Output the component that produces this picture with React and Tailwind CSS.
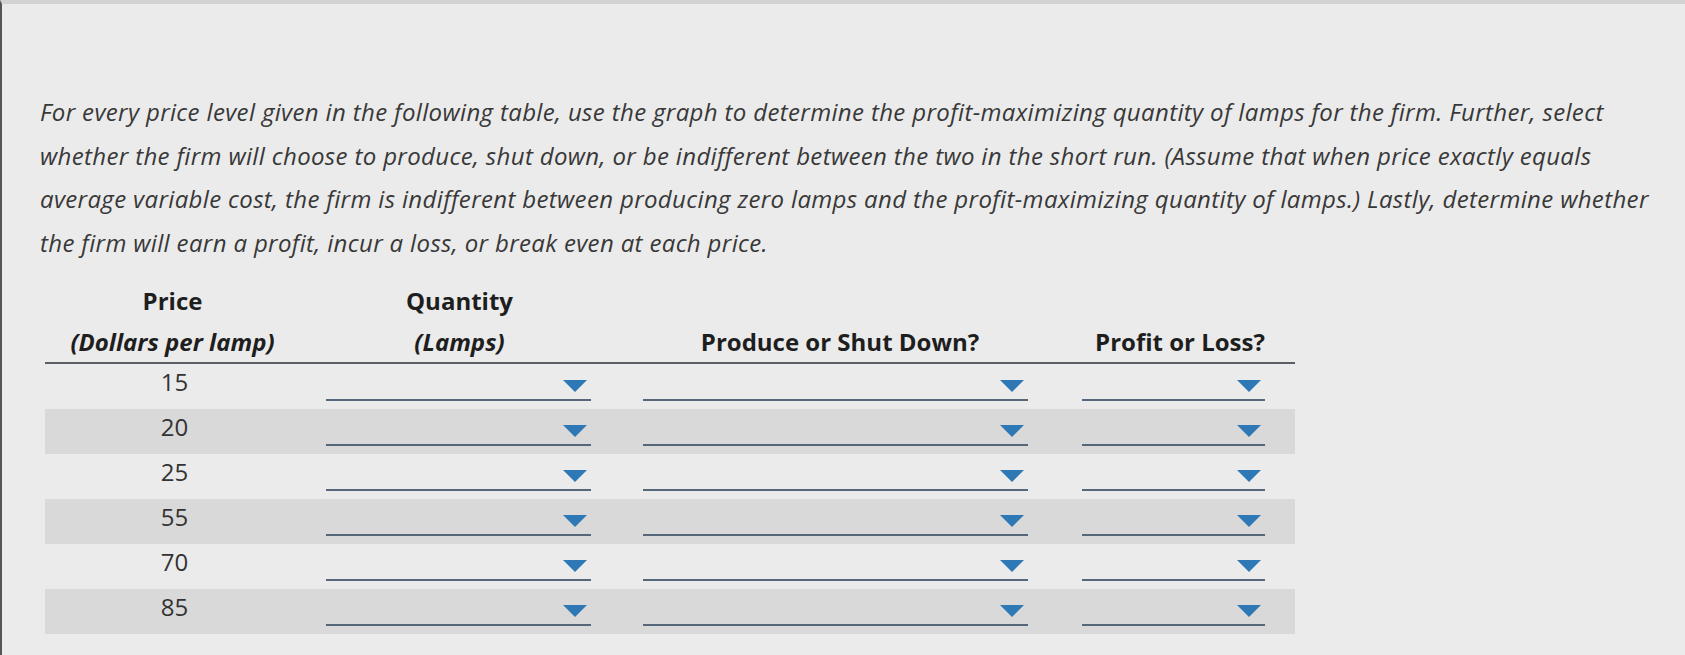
import React from "react";

const lines = [
  "For every price level given in the following table, use the graph to determine the profit-maximizing quantity of lamps for the firm. Further, select",
  "whether the firm will choose to produce, shut down, or be indifferent between the two in the short run. (Assume that when price exactly equals",
  "average variable cost, the firm is indifferent between producing zero lamps and the profit-maximizing quantity of lamps.) Lastly, determine whether",
  "the firm will earn a profit, incur a loss, or break even at each price.",
];

const prices = ["15", "20", "25", "55", "70", "85"];

function Dropdown({ pl, pr }) {
  return (
    <div className={`h-[45px] ${pl} ${pr}`}>
      <div className="h-[37px] border-b-2 border-[#56677a] flex items-end justify-end pr-[4px] pb-[7px]">
        <svg width="24" height="12" viewBox="0 0 24 12">
          <path d="M0 0 H24 L12 12 Z" fill="#2f78b6" />
        </svg>
      </div>
    </div>
  );
}

export default function App() {
  return (
    <div
      className="w-[1685px] h-[655px] bg-[#ebebeb] border-t-[4px] border-[#d2d2d2] border-l-[2px] border-l-[#555555] overflow-hidden"
      style={{ fontFamily: '"Open Sans", "Noto Sans", sans-serif' }}
    >
      <div className="pl-[38px] pt-[86px] text-[24px] leading-[43.6px] italic text-[#383838] tracking-[0.35px]">
        {lines.map((l, i) => (
          <div key={i} className="whitespace-nowrap">{l}</div>
        ))}
      </div>

      <div className="ml-[43px] mt-[16px] w-[1250px]">
        <div className="grid grid-cols-[255px_315px_440px_240px] border-b-2 border-[#5a5f66] text-[24px] leading-[41px] font-bold text-[#1e1e1e]">
          <div className="flex flex-col items-center">
            <div>Price</div>
            <div className="italic">(Dollars per lamp)</div>
          </div>
          <div className="flex flex-col items-center pl-[4px]">
            <div>Quantity</div>
            <div className="italic">(Lamps)</div>
          </div>
          <div className="flex flex-col items-center justify-end pl-[10px]">
            <div>Produce or Shut Down?</div>
          </div>
          <div className="flex flex-col items-center justify-end pl-[10px]">
            <div>Profit or Loss?</div>
          </div>
        </div>

        {prices.map((p, i) => (
          <div
            key={p}
            className={`grid grid-cols-[255px_315px_440px_240px] ${i % 2 === 1 ? "bg-[#d9d9d9]" : ""}`}
          >
            <div className="h-[45px] text-center text-[24px] leading-[36px] text-[#333333] pl-[4px]">{p}</div>
            <Dropdown pl="pl-[26px]" pr="pr-[24px]" />
            <Dropdown pl="pl-[28px]" pr="pr-[27px]" />
            <Dropdown pl="pl-[27px]" pr="pr-[30px]" />
          </div>
        ))}
      </div>
    </div>
  );
}
